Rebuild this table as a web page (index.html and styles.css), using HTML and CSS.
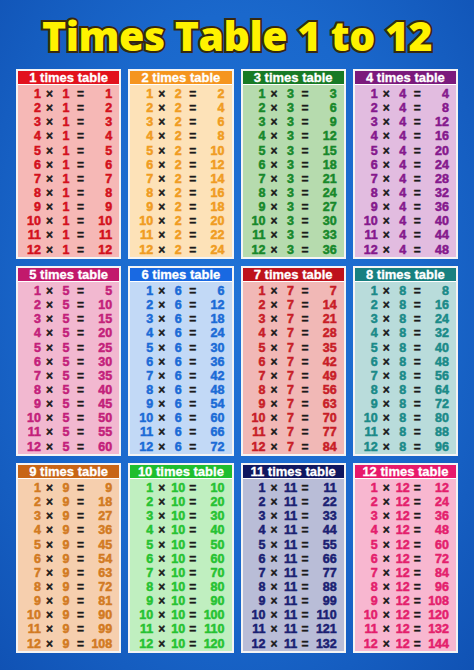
FILE: index.html
```html
<!DOCTYPE html>
<html lang="en">
<head>
<meta charset="utf-8">
<title>Times Table 1 to 12</title>
<link rel="stylesheet" href="styles.css">
</head>
<body>
<div class="poster">
  <h1 class="title">Times Table 1 to 12</h1>
  <div class="grid" id="grid"></div>
</div>
<script src="app.js"></script>
</body>
</html>
```

FILE: app.js
```js
const grid = document.getElementById('grid');
for (let n = 1; n <= 12; n++) {
  const card = document.createElement('div');
  card.className = 'card t' + n;
  const head = document.createElement('div');
  head.className = 'head';
  head.textContent = n + ' times table';
  card.appendChild(head);
  const body = document.createElement('div');
  body.className = 'body';
  for (let i = 1; i <= 12; i++) {
    const row = document.createElement('div');
    row.className = 'row';
    row.innerHTML =
      '<span class="a">' + i + '</span>' +
      '<span class="op">×</span>' +
      '<span class="b">' + n + '</span>' +
      '<span class="op eq">=</span>' +
      '<span class="r">' + (i * n) + '</span>';
    body.appendChild(row);
  }
  card.appendChild(body);
  grid.appendChild(card);
}
```

FILE: styles.css
```css
html, body {
  margin: 0;
  padding: 0;
}
body {
  width: 474px;
  height: 670px;
  overflow: hidden;
  font-family: "Liberation Sans", Arial, sans-serif;
}
.poster {
  width: 474px;
  height: 670px;
  box-sizing: border-box;
  background: radial-gradient(ellipse at 50% 45%, #2173d6 0%, #1a68cc 55%, #1052b4 100%);
  display: flex;
  flex-direction: column;
}
.title {
  margin: 0;
  height: 69px;
  display: flex;
  align-items: center;
  justify-content: center;
  font-family: "Open Sans", sans-serif;
  font-weight: 800;
  font-size: 41px;
  letter-spacing: -0.5px;
  color: #fff200;
  -webkit-text-stroke: 4px #3a2a10;
  paint-order: stroke fill;
  text-shadow: 0 0 2px rgba(0,0,0,0.35);
  padding-top: 1px;
  box-sizing: border-box;
}
.grid {
  display: grid;
  grid-template-columns: repeat(4, 1fr);
  grid-auto-rows: 190px;
  column-gap: 7px;
  row-gap: 7px;
  padding: 0 16px 0 16px;
}
.card {
  border: 2px solid #f4f4f4;
  display: flex;
  flex-direction: column;
  background: #fff;
}
.head {
  height: 13px;
  line-height: 13px;
  color: #fff;
  font-weight: 700;
  font-size: 13px;
  -webkit-text-stroke: 0.3px #fff;
  text-align: center;
  margin-bottom: 1px;
  white-space: nowrap;
}
.body {
  flex: 1;
  padding-top: 2px;
}
.row {
  display: grid;
  grid-template-columns: 23px 17px 16px 13px 1fr;
  height: 14.15px;
  line-height: 14.15px;
  font-weight: 700;
  font-size: 12.5px;
  -webkit-text-stroke: 0.5px currentColor;
}
.row .a { text-align: right; }
.row .op { text-align: center; color: #1b1b1b; font-size: 12px; -webkit-text-stroke: 0.4px #1b1b1b; }
.row .eq { font-size: 12px; }
.row .b { text-align: center; }
.row .r { text-align: right; padding-right: 7px; }

.t1 .head { background: #e2121d; }
.t1 .body { background: #f6b8b6; color: #d3101c; }
.t2 .head { background: #f5951f; }
.t2 .body { background: #fde2b8; color: #f09c22; }
.t3 .head { background: #177a25; }
.t3 .body { background: #b6dbae; color: #17882a; }
.t4 .head { background: #7b1a7c; }
.t4 .body { background: #e2bce0; color: #85188c; }
.t5 .head { background: #c2196c; }
.t5 .body { background: #f2b8d0; color: #c3207a; }
.t6 .head { background: #1969e2; }
.t6 .body { background: #c2d9f6; color: #1b6bd6; }
.t7 .head { background: #be121c; }
.t7 .body { background: #f1b8b6; color: #c81d27; }
.t8 .head { background: #188080; }
.t8 .body { background: #b9dcdb; color: #1a8a88; }
.t9 .head { background: #c86516; }
.t9 .body { background: #f6cfae; color: #d27a22; }
.t10 .head { background: #1fbe2e; }
.t10 .body { background: #c0efc0; color: #26c232; }
.t11 .head { background: #0f1760; }
.t11 .body { background: #b9bdd7; color: #1a2072; }
.t12 .head { background: #e8196b; }
.t12 .body { background: #f8b7d0; color: #e41e6c; }
```
